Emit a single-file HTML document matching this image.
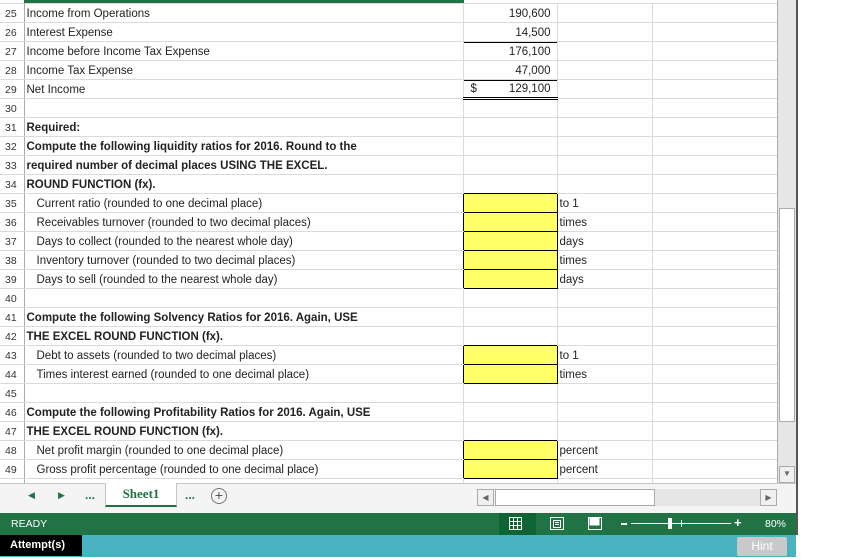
<!DOCTYPE html>
<html><head><meta charset="utf-8"><style>
*{margin:0;padding:0;box-sizing:border-box}
body{width:852px;height:560px;background:#fff;position:relative;overflow:hidden;font-family:"Liberation Sans",sans-serif;color:#222}
table{position:absolute;left:0;top:3px;border-collapse:collapse;table-layout:fixed;width:777px}
td{height:19px;border:1px solid #dadada;font-size:11.5px;padding:0 2px;white-space:nowrap;overflow:visible;line-height:15px;vertical-align:bottom}
td.n{font-size:10.5px;color:#333;border-right:1px solid #ababab;border-left:none;padding-left:5px;text-align:left}
.b{font-weight:bold}
td.i{padding-left:12px;border-right:none}
td.nb{border-bottom:none}
.r{text-align:right;padding-right:6px}
td.y{background:#ffff66;border:1px solid #000}
.tt{box-shadow:inset 0 1px 0 #000}
.dd{border-bottom:3px double #000}
.abs{position:absolute}
</style></head><body>
<div class="abs" style="left:24px;top:0;width:440px;height:3px;background:#217346"></div>
<table>
<colgroup><col style="width:24px"><col style="width:439px"><col style="width:94px"><col style="width:95px"><col style="width:125px"></colgroup>
<tr><td class="n">25</td><td>Income from Operations</td><td class="r">190,600</td><td></td><td></td></tr>
<tr><td class="n">26</td><td>Interest Expense</td><td class="r">14,500</td><td></td><td></td></tr>
<tr><td class="n">27</td><td>Income before Income Tax Expense</td><td class="r tt">176,100</td><td></td><td></td></tr>
<tr><td class="n">28</td><td>Income Tax Expense</td><td class="r">47,000</td><td></td><td></td></tr>
<tr><td class="n">29</td><td>Net Income</td><td class="r tt dd" style="position:relative"><span style="position:absolute;left:7px">$</span>129,100</td><td></td><td></td></tr>
<tr><td class="n">30</td><td></td><td></td><td></td><td></td></tr>
<tr><td class="n">31</td><td class="b">Required:</td><td></td><td></td><td></td></tr>
<tr><td class="n">32</td><td class="b">Compute the following liquidity ratios for 2016. Round to the</td><td></td><td></td><td></td></tr>
<tr><td class="n">33</td><td class="b">required number of decimal places USING THE EXCEL.</td><td></td><td></td><td></td></tr>
<tr><td class="n">34</td><td class="b">ROUND FUNCTION (fx).</td><td class="nb"></td><td></td><td></td></tr>
<tr><td class="n">35</td><td class="i">Current ratio (rounded to one decimal place)</td><td class="y"></td><td>to 1</td><td></td></tr>
<tr><td class="n">36</td><td class="i">Receivables turnover (rounded to two decimal places)</td><td class="y"></td><td>times</td><td></td></tr>
<tr><td class="n">37</td><td class="i">Days to collect (rounded to the nearest whole day)</td><td class="y"></td><td>days</td><td></td></tr>
<tr><td class="n">38</td><td class="i">Inventory turnover (rounded to two decimal places)</td><td class="y"></td><td>times</td><td></td></tr>
<tr><td class="n">39</td><td class="i">Days to sell (rounded to the nearest whole day)</td><td class="y"></td><td>days</td><td></td></tr>
<tr><td class="n">40</td><td></td><td></td><td></td><td></td></tr>
<tr><td class="n">41</td><td class="b">Compute the following Solvency Ratios for 2016. Again, USE</td><td></td><td></td><td></td></tr>
<tr><td class="n">42</td><td class="b">THE EXCEL ROUND FUNCTION (fx).</td><td class="nb"></td><td></td><td></td></tr>
<tr><td class="n">43</td><td class="i">Debt to assets (rounded to two decimal places)</td><td class="y"></td><td>to 1</td><td></td></tr>
<tr><td class="n">44</td><td class="i">Times interest earned (rounded to one decimal place)</td><td class="y"></td><td>times</td><td></td></tr>
<tr><td class="n">45</td><td></td><td></td><td></td><td></td></tr>
<tr><td class="n">46</td><td class="b">Compute the following Profitability Ratios for 2016. Again, USE</td><td></td><td></td><td></td></tr>
<tr><td class="n">47</td><td class="b">THE EXCEL ROUND FUNCTION (fx).</td><td class="nb"></td><td></td><td></td></tr>
<tr><td class="n">48</td><td class="i">Net profit margin (rounded to one decimal place)</td><td class="y"></td><td>percent</td><td></td></tr>
<tr><td class="n">49</td><td class="i">Gross profit percentage (rounded to one decimal place)</td><td class="y"></td><td>percent</td><td></td></tr>
<tr><td class="n">50</td><td></td><td></td><td></td><td></td></tr>
</table>
<!-- vertical scrollbar -->
<div class="abs" style="left:777px;top:0;width:19px;height:484px;background:#e6e6e6;border-left:1px solid #ababab"></div>
<div class="abs" style="left:779px;top:208px;width:16px;height:214px;background:#fff;border:1px solid #ababab"></div>
<div class="abs" style="left:779px;top:466px;width:16px;height:17px;background:#f0f0f0;border:1px solid #ababab;font-size:8px;color:#666;text-align:center;line-height:14px">▼</div>
<div class="abs" style="left:796px;top:0;width:2px;height:535px;background:#555"></div>
<!-- tab bar -->
<div class="abs" style="left:0;top:483px;width:796px;height:30px;background:#f4f4f4;border-top:1px solid #c6c6c6"></div>
<div class="abs" style="left:28px;top:490px;font-size:9px;color:#217346">◀</div>
<div class="abs" style="left:58px;top:490px;font-size:9px;color:#217346">▶</div>
<div class="abs" style="left:85px;top:488px;font-size:12px;color:#217346;font-weight:bold">...</div>
<div class="abs" style="left:105px;top:483px;width:72px;height:24px;background:#fff;border-left:1px solid #c6c6c6;border-right:1px solid #c6c6c6;border-bottom:2px solid #217346;text-align:center;font-family:'Liberation Serif',serif;font-weight:bold;font-size:13px;color:#217346;line-height:22px">Sheet1</div>
<div class="abs" style="left:185px;top:488px;font-size:12px;color:#217346;font-weight:bold">...</div>
<div class="abs" style="left:211px;top:488px;width:16px;height:16px;border:1px solid #777;border-radius:50%;text-align:center;font-size:14px;line-height:13px;color:#555">+</div>
<div class="abs" style="left:477px;top:489px;width:17px;height:17px;background:#f0f0f0;border:1px solid #ababab;font-size:8px;color:#666;text-align:center;line-height:15px">◀</div>
<div class="abs" style="left:495px;top:489px;width:265px;height:17px;background:#e6e6e6"></div>
<div class="abs" style="left:495px;top:489px;width:160px;height:17px;background:#fff;border:1px solid #ababab"></div>
<div class="abs" style="left:760px;top:489px;width:17px;height:17px;background:#f0f0f0;border:1px solid #ababab;font-size:8px;color:#666;text-align:center;line-height:15px">▶</div>
<!-- status -->
<div class="abs" style="left:0;top:513px;width:796px;height:22px;background:#217346"></div>
<div class="abs" style="left:11px;top:518px;font-size:10.5px;color:#fff">READY</div>
<div class="abs" style="left:499px;top:513px;width:37px;height:22px;background:#0f6435"></div>
<svg class="abs" style="left:508px;top:517px" width="100" height="14" viewBox="0 0 100 14" fill="none" stroke="#fff" stroke-width="1">
<rect x="1.5" y="0.5" width="12" height="12"/><path d="M5.5 0.5V12.5M9.5 0.5V12.5M1.5 4.5H13.5M1.5 8.5H13.5"/>
<rect x="42.5" y="0.5" width="13" height="12"/><rect x="45.5" y="3.5" width="7" height="7"/><path d="M47 5.5H51M47 7.5H51"/>
<rect x="80.5" y="0.5" width="13" height="12"/><rect x="82" y="1" width="4" height="7" fill="#fff"/><rect x="87" y="1" width="4" height="7" fill="#fff"/>
</svg>
<div class="abs" style="left:621px;top:523px;width:6px;height:2px;background:#fff"></div>
<div class="abs" style="left:631px;top:523px;width:100px;height:1px;background:#fff"></div>
<div class="abs" style="left:668px;top:518px;width:4px;height:11px;background:#fff"></div>
<div class="abs" style="left:681px;top:520px;width:1px;height:7px;background:#fff"></div>
<div class="abs" style="left:734px;top:515px;font-size:13px;font-weight:bold;color:#fff">+</div>
<div class="abs" style="left:765px;top:518px;font-size:10.5px;color:#fff">80%</div>
<!-- attempt bar -->
<div class="abs" style="left:0;top:535px;width:796px;height:22px;background:#4ab3c2"></div>
<div class="abs" style="left:0;top:535px;width:82px;height:21px;background:#000;color:#fff;font-weight:bold;font-size:11px;line-height:21px;padding-left:10px">Attempt(s)</div>
<div class="abs" style="left:737px;top:537px;width:50px;height:19px;background:#c9c9c9;color:#fff;font-size:12px;text-align:center;line-height:19px;border-radius:2px">Hint</div>
</body></html>
